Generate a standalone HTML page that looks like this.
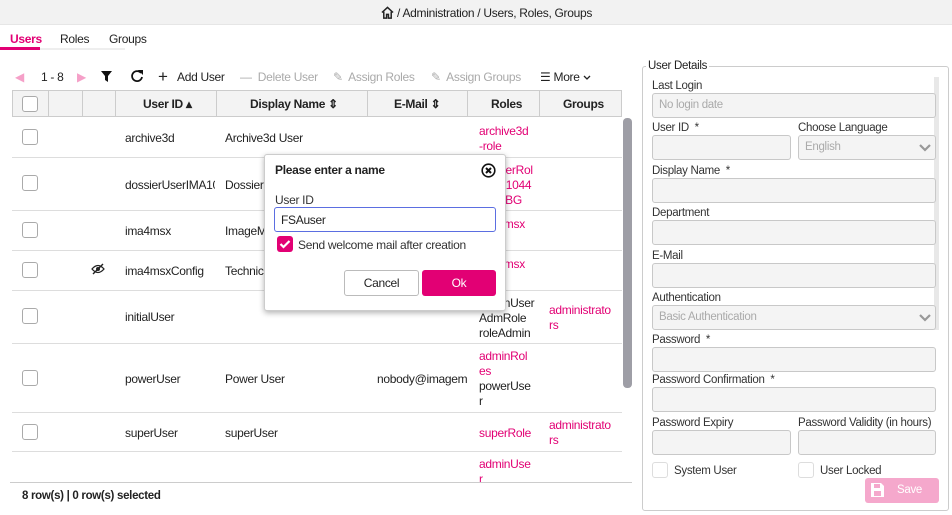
<!DOCTYPE html>
<html><head><meta charset="utf-8">
<style>
*{box-sizing:border-box;margin:0;padding:0}
body{width:952px;height:515px;overflow:hidden;background:#fff;font-family:"Liberation Sans",sans-serif;font-size:12px;color:#222;position:relative;letter-spacing:-0.3px}
.a{position:absolute;white-space:nowrap}
.pk{color:#e20074}
.cb{position:absolute;width:16px;height:16px;border:1px solid #aaa;border-radius:3px;background:#fff}
.hl{position:absolute;height:1px;background:#ddd;left:12px;width:610px}
.vl{position:absolute;width:1px;background:#ccc;top:90px;height:27px}
.lbl{position:absolute;left:652px;font-size:11.5px;color:#333}
.inp{position:absolute;height:25px;border:1px solid #c8c8c8;border-radius:3px;background:#f4f4f4}
.gray{color:#aaa}
.tb{position:absolute;top:70px;font-size:12px}
.chev{position:absolute;right:4px;top:7px}
</style></head><body>
<div class="a" style="left:0;top:0;width:952px;height:25px;background:#f2f2f2;border-bottom:1px solid #e6e6e6"></div>
<div class="a" style="left:381px;top:6px;font-size:12px">
<svg width="13" height="13" viewBox="0 0 14 14" style="vertical-align:-2px"><path d="M1 7L7 1.5 13 7M3 6v7h3v-4h2v4h3V6" fill="none" stroke="#222" stroke-width="1.6"/></svg> / Administration / Users, Roles, Groups</div>
<div class="a" style="left:0;top:48px;width:125px;height:2px;background:#eee"></div>
<div class="a" style="left:0;top:47px;width:40px;height:3px;background:#e20074"></div>
<div class="a pk" style="left:10px;top:32px;font-weight:bold">Users</div>
<div class="a" style="left:60px;top:32px">Roles</div>
<div class="a" style="left:109px;top:32px">Groups</div>

<div class="tb" style="left:15px;color:#f5a0c8">◀</div>
<div class="tb" style="left:41px">1 - 8</div>
<div class="tb" style="left:77px;color:#f5a0c8">▶</div>
<svg class="a" style="left:101px;top:71px" width="11" height="11" viewBox="0 0 11 11"><path d="M0 0h11L7 5v6L4 9V5z" fill="#111"/></svg>
<svg class="a" style="left:130px;top:69px" width="14" height="14" viewBox="0 0 14 14"><path d="M11 4A5 5 0 1 0 12 8" fill="none" stroke="#111" stroke-width="1.8"/><path d="M8 1h5v5z" fill="#111"/></svg>
<div class="tb" style="left:158px;top:67px;font-size:17px">+</div>
<div class="tb" style="left:177px">Add User</div>
<div class="tb gray" style="left:240px">—&nbsp; Delete User</div>
<div class="tb gray" style="left:333px">✎&nbsp; Assign Roles</div>
<div class="tb gray" style="left:431px">✎&nbsp; Assign Groups</div>
<div class="tb" style="left:540px">☰ More <svg width="8" height="6" viewBox="0 0 8 6"><path d="M1 1l3 3 3-3" fill="none" stroke="#222" stroke-width="1.3"/></svg></div>

<div class="a" style="left:12px;top:90px;width:610px;height:27px;background:#f3f3f3;border:1px solid #ccc"></div>
<div class="vl" style="left:48px"></div><div class="vl" style="left:82px"></div><div class="vl" style="left:115px"></div><div class="vl" style="left:216px"></div><div class="vl" style="left:367px"></div><div class="vl" style="left:467px"></div><div class="vl" style="left:539px"></div>
<div class="cb" style="left:22px;top:96px"></div>
<div class="a" style="left:143px;top:97px;font-weight:bold">User ID ▴</div>
<div class="a" style="left:250px;top:97px;font-weight:bold">Display Name ⇕</div>
<div class="a" style="left:394px;top:97px;font-weight:bold">E-Mail ⇕</div>
<div class="a" style="left:491px;top:97px;font-weight:bold">Roles</div>
<div class="a" style="left:563px;top:97px;font-weight:bold">Groups</div>

<div class="hl" style="top:157px"></div><div class="hl" style="top:210px"></div><div class="hl" style="top:250px"></div><div class="hl" style="top:290px"></div><div class="hl" style="top:343px"></div><div class="hl" style="top:412px"></div><div class="hl" style="top:451px"></div>
<div class="a" style="left:10px;top:482px;width:622px;height:1px;background:#ccc"></div>
<div class="a" style="left:623px;top:118px;width:9px;height:270px;background:#9e9ea6;border-radius:4px"></div>

<div class="cb" style="left:22px;top:129px"></div><div class="a" style="left:125px;top:131px">archive3d</div><div class="a" style="left:225px;top:131px">Archive3d User</div><div class="a pk" style="left:479px;top:124px;line-height:15px">archive3d<br>-role</div>
<div class="cb" style="left:22px;top:175px"></div><div class="a" style="left:125px;top:178px;width:90px;overflow:hidden">dossierUserIMA1044</div><div class="a" style="left:225px;top:178px">DossierUser</div><div class="a pk" style="left:479px;top:163px;line-height:15px">dossierRol<br>eIMA1044<br>0ApcBG</div>
<div class="cb" style="left:22px;top:222px"></div><div class="a" style="left:125px;top:224px">ima4msx</div><div class="a" style="left:225px;top:224px">ImageMSX</div><div class="a pk" style="left:479px;top:217px;line-height:15px">ima4msx<br>g</div>
<div class="cb" style="left:22px;top:262px"></div>
<svg class="a" style="left:91px;top:263px" width="14" height="12" viewBox="0 0 14 12"><path d="M1 6Q7 -1 13 6Q7 13 1 6z" fill="none" stroke="#222" stroke-width="1.3"/><circle cx="7" cy="6" r="2" fill="#222"/><path d="M2 11L12 1" stroke="#222" stroke-width="1.4"/></svg>
<div class="a" style="left:125px;top:264px">ima4msxConfig</div><div class="a" style="left:225px;top:264px">Technical</div><div class="a pk" style="left:479px;top:257px;line-height:15px">ima4msx<br>g</div>
<div class="cb" style="left:22px;top:308px"></div><div class="a" style="left:125px;top:310px">initialUser</div><div class="a" style="left:479px;top:296px;line-height:15px">adminUser<br>AdmRole<br>roleAdmin</div><div class="a pk" style="left:549px;top:303px;line-height:15px">administrato<br>rs</div>
<div class="cb" style="left:22px;top:370px"></div><div class="a" style="left:125px;top:372px">powerUser</div><div class="a" style="left:225px;top:372px">Power User</div><div class="a" style="left:377px;top:372px;width:90px;overflow:hidden">nobody@imagemaster</div><div class="a" style="left:479px;top:349px;line-height:15px"><span class="pk">adminRol<br>es</span><br>powerUse<br>r</div>
<div class="cb" style="left:22px;top:424px"></div><div class="a" style="left:125px;top:426px">superUser</div><div class="a" style="left:225px;top:426px">superUser</div><div class="a pk" style="left:479px;top:426px">superRole</div><div class="a pk" style="left:549px;top:418px;line-height:15px">administrato<br>rs</div>
<div class="a pk" style="left:479px;top:457px;line-height:15px;height:25px;overflow:hidden">adminUse<br>r</div>
<div class="a" style="left:22px;top:490px;font-weight:bold;font-size:11.5px">8 row(s) | 0 row(s) selected</div>

<div class="a" style="left:264px;top:154px;width:242px;height:157px;background:#fff;border:1px solid #ccc;border-radius:3px;box-shadow:0 2px 6px rgba(0,0,0,.3)"></div>
<div class="a" style="left:275px;top:163px;font-weight:bold">Please enter a name</div>
<svg class="a" style="left:481px;top:163px" width="15" height="15" viewBox="0 0 15 15"><circle cx="7.5" cy="7.5" r="6.3" fill="none" stroke="#111" stroke-width="1.6"/><path d="M5 5l5 5M10 5l-5 5" stroke="#111" stroke-width="2"/></svg>
<div class="a" style="left:275px;top:193px;color:#333">User ID</div>
<div class="a" style="left:274px;top:207px;width:222px;height:25px;border:1.5px solid #5b6ee1;border-radius:3px;padding:5px 6px">FSAuser</div>
<div class="a" style="left:277px;top:236px;width:16px;height:16px;background:#e20074;border-radius:3px"><svg width="16" height="16"><path d="M3.5 8l3 3 6-6" fill="none" stroke="#fff" stroke-width="2.2"/></svg></div>
<div class="a" style="left:298px;top:238px;color:#333">Send welcome mail after creation</div>
<div class="a" style="left:344px;top:270px;width:75px;height:26px;border:1px solid #bbb;border-radius:3px;text-align:center;line-height:24px">Cancel</div>
<div class="a" style="left:422px;top:270px;width:74px;height:26px;background:#e20074;border-radius:3px;text-align:center;line-height:26px;color:#fff">Ok</div>

<div class="a" style="left:642px;top:66px;width:307px;height:445px;border:1px solid #ccc;border-radius:3px"></div>
<div class="a" style="left:646px;top:60px;background:#fff;padding:0 2px;font-size:11.5px">User Details</div>
<div class="a" style="left:934px;top:77px;width:5px;height:253px;background:#e8e8e8"></div>
<div class="lbl" style="top:80px">Last Login</div><div class="inp" style="left:652px;top:93px;width:284px;color:#aaa;padding:5px 6px;font-size:11.5px">No login date</div>
<div class="lbl" style="top:122px">User ID &nbsp;*</div><div class="inp" style="left:652px;top:135px;width:139px"></div>
<div class="lbl" style="top:122px;left:798px">Choose Language</div><div class="inp" style="left:798px;top:135px;width:138px;color:#aaa;padding:5px 6px;font-size:11.5px">English<svg class="chev" width="12" height="9" viewBox="0 0 12 9"><path d="M1 2l5 5 5-5" fill="none" stroke="#999" stroke-width="2.2"/></svg></div>
<div class="lbl" style="top:165px">Display Name &nbsp;*</div><div class="inp" style="left:652px;top:178px;width:284px"></div>
<div class="lbl" style="top:207px">Department</div><div class="inp" style="left:652px;top:220px;width:284px"></div>
<div class="lbl" style="top:250px">E-Mail</div><div class="inp" style="left:652px;top:263px;width:284px"></div>
<div class="lbl" style="top:292px">Authentication</div><div class="inp" style="left:652px;top:305px;width:284px;color:#aaa;padding:5px 6px;font-size:11.5px">Basic Authentication<svg class="chev" width="12" height="9" viewBox="0 0 12 9"><path d="M1 2l5 5 5-5" fill="none" stroke="#999" stroke-width="2.2"/></svg></div>
<div class="lbl" style="top:334px">Password &nbsp;*</div><div class="inp" style="left:652px;top:347px;width:284px"></div>
<div class="lbl" style="top:374px">Password Confirmation &nbsp;*</div><div class="inp" style="left:652px;top:387px;width:284px"></div>
<div class="lbl" style="top:417px">Password Expiry</div><div class="inp" style="left:652px;top:430px;width:139px"></div>
<div class="lbl" style="top:417px;left:798px">Password Validity (in hours)</div><div class="inp" style="left:798px;top:430px;width:138px"></div>
<div class="cb" style="left:652px;top:462px;border-color:#ddd"></div><div class="lbl" style="left:674px;top:465px">System User</div>
<div class="cb" style="left:798px;top:462px;border-color:#ddd"></div><div class="lbl" style="left:820px;top:465px">User Locked</div>
<div class="a" style="left:865px;top:478px;width:74px;height:25px;background:#f5a8cc;border-radius:3px;color:#fff;font-size:11.5px;line-height:25px;padding-left:32px">Save</div>
<svg class="a" style="left:871px;top:483px" width="13" height="14" viewBox="0 0 13 14"><path d="M0 0h10l3 3v11H0z" fill="#fff"/><rect x="3" y="1" width="6" height="4" fill="#f5a8cc"/><rect x="3" y="8" width="7" height="5" fill="#f5a8cc"/></svg>
</body></html>
